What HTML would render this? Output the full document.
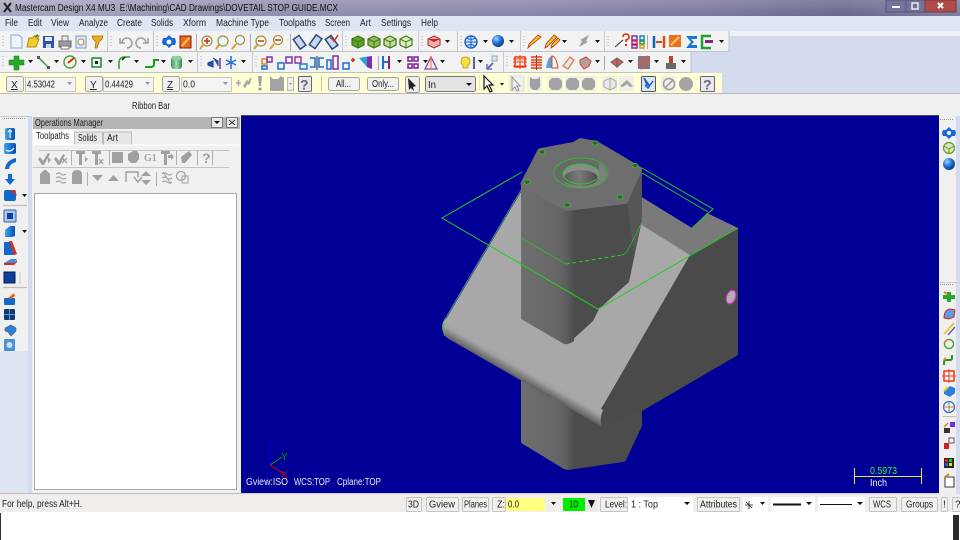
<!DOCTYPE html>
<html><head><meta charset="utf-8"><title>Mastercam</title>
<style>
html,body{margin:0;padding:0;background:#fff;overflow:hidden}
svg{display:block;position:absolute;left:0;top:0;filter:blur(.35px)}
text{font-family:"Liberation Sans",sans-serif;font-size:10px;fill:#222;white-space:pre}
.b{fill:#f1f1f1;stroke:#a5a5a5;stroke-width:1}
.dd{fill:#111}
.g{fill:#a0a0a0}
.gs{fill:none;stroke:#a0a0a0;stroke-width:1.6}
</style></head><body>
<svg width="960" height="540" viewBox="0 0 960 540" xmlns="http://www.w3.org/2000/svg">
<defs>
<linearGradient id="tb" x1="0" x2="1" y1="0" y2="0"><stop offset="0" stop-color="#a8a6bf"/><stop offset=".3" stop-color="#8f8cad"/><stop offset=".55" stop-color="#8783a8"/><stop offset=".75" stop-color="#78759c"/><stop offset=".88" stop-color="#67668c"/><stop offset="1" stop-color="#7f7da0"/></linearGradient>
<linearGradient id="tb2" x1="0" x2="0" y1="0" y2="1"><stop offset="0" stop-color="#fff" stop-opacity=".18"/><stop offset="1" stop-color="#fff" stop-opacity="0"/></linearGradient>
<linearGradient id="fil" gradientUnits="userSpaceOnUse" x1="520" y1="365" x2="512" y2="379"><stop offset="0" stop-color="#a8a8a8"/><stop offset=".2" stop-color="#a4a4a4"/><stop offset="1" stop-color="#484848"/></linearGradient>
<linearGradient id="pl" gradientUnits="userSpaceOnUse" x1="521" x2="575" y1="0" y2="0"><stop offset="0" stop-color="#6e6e6e"/><stop offset=".7" stop-color="#666"/><stop offset=".85" stop-color="#5c5c5c"/><stop offset="1" stop-color="#4c4c4c"/></linearGradient>
<linearGradient id="hol" x1="0" x2="1" y1="0" y2="0"><stop offset="0" stop-color="#5c5c5c"/><stop offset=".45" stop-color="#7a7a7a"/><stop offset="1" stop-color="#4a4a4a"/></linearGradient>
<linearGradient id="bs" x1="0" x2="1" y1="0" y2="0"><stop offset="0" stop-color="#3aa5f0"/><stop offset="1" stop-color="#0a4fb0"/></linearGradient>
<radialGradient id="sph" cx=".35" cy=".3" r=".8"><stop offset="0" stop-color="#9fd0ff"/><stop offset=".5" stop-color="#1c6fd0"/><stop offset="1" stop-color="#0a2f80"/></radialGradient>
<linearGradient id="cy" x1="0" x2="1" y1="0" y2="0"><stop offset="0" stop-color="#2f9a55"/><stop offset=".5" stop-color="#a8d8b0"/><stop offset="1" stop-color="#2b8a4a"/></linearGradient>
</defs>

<!-- Title bar -->
<rect width="960" height="16" fill="url(#tb)"/><rect width="960" height="16" fill="url(#tb2)"/>
<path d="M4 3l7 9M11 3l-7 9" stroke="#222" stroke-width="2"/>
<text x="15" y="11" textLength="323" lengthAdjust="spacingAndGlyphs" style="fill:#111">Mastercam Design X4 MU3  E:\Machining\CAD Drawings\DOVETAIL STOP GUIDE.MCX</text>
<rect x="886" y="0" width="20" height="12" fill="#75739a" stroke="#55547a"/>
<rect x="906" y="0" width="19" height="12" fill="#75739a" stroke="#55547a"/>
<rect x="925" y="0" width="31" height="12" fill="#b24a45" stroke="#6d3a50"/>
<rect x="892" y="6" width="8" height="2" fill="#fff"/>
<rect x="912" y="3" width="6" height="6" fill="none" stroke="#fff" stroke-width="1.3"/>
<path d="M938 3l5 5M943 3l-5 5" stroke="#fff" stroke-width="2"/>

<!-- Menu bar -->
<rect y="16" width="960" height="15" fill="#dfe5f3"/>
<g>
<text x="5" y="26" textLength="13" lengthAdjust="spacingAndGlyphs">File</text><text x="28" y="26" textLength="14" lengthAdjust="spacingAndGlyphs">Edit</text><text x="51" y="26" textLength="18" lengthAdjust="spacingAndGlyphs">View</text><text x="79" y="26" textLength="29" lengthAdjust="spacingAndGlyphs">Analyze</text><text x="117" y="26" textLength="25" lengthAdjust="spacingAndGlyphs">Create</text><text x="151" y="26" textLength="22" lengthAdjust="spacingAndGlyphs">Solids</text><text x="183" y="26" textLength="23" lengthAdjust="spacingAndGlyphs">Xform</text><text x="216" y="26" textLength="53" lengthAdjust="spacingAndGlyphs">Machine Type</text><text x="279" y="26" textLength="37" lengthAdjust="spacingAndGlyphs">Toolpaths</text><text x="325" y="26" textLength="25" lengthAdjust="spacingAndGlyphs">Screen</text><text x="360" y="26" textLength="11" lengthAdjust="spacingAndGlyphs">Art</text><text x="381" y="26" textLength="30" lengthAdjust="spacingAndGlyphs">Settings</text><text x="421" y="26" textLength="17" lengthAdjust="spacingAndGlyphs">Help</text>
</g>

<!-- Toolbar background -->
<rect y="31" width="960" height="63" fill="#d5dbee"/>
<rect y="31" width="960" height="5" fill="#eef1f8"/>
<rect x="0" y="31" width="729" height="20" fill="#f2f2f2"/>
<rect x="0" y="52" width="691" height="20" fill="#f2f2f2"/>
<path d="M0 51.500H729V31M0 72.500H691V52" fill="none" stroke="#bfc3cc"/>
<path d="M107.500 31v20M153.500 31v20M342.500 31v20M418.500 31v20M457.500 31v20M520.500 31v20M604.500 31v20M197.500 52v20M252.500 52v20M503.500 52v20" stroke="#c4c8d0"/>
<rect x="0" y="73" width="722" height="20" fill="#ffffd4"/>
<rect y="93" width="960" height="1" fill="#b8b8b8"/>
<rect y="94" width="960" height="22" fill="#f0f0f0"/>
<text x="132" y="109" textLength="38" lengthAdjust="spacingAndGlyphs">Ribbon Bar</text>

<!-- Row 1 icons -->
<path d="M11 35h8l3 3v10H11z" fill="#eef4ff" stroke="#8aa8d0"/>
<path d="M27 47l2-9h4l1-2h5l-2 3h2l-3 8z" fill="#f2cc30" stroke="#b58a10"/><path d="M35 37l3-2" stroke="#2a9a30" stroke-width="2"/>
<path d="M43 36h11v12H43z" fill="#3050b0"/><rect x="45" y="37" width="7" height="4" fill="#dfe8ff"/><rect x="46" y="44" width="5" height="4" fill="#cdd"/>
<rect x="59" y="41" width="12" height="6" fill="#9a9aa4" stroke="#666"/><rect x="62" y="36" width="6" height="5" fill="#e8e8ee" stroke="#777"/><rect x="61" y="46" width="8" height="3" fill="#fff" stroke="#777"/>
<rect x="76" y="36" width="10" height="12" fill="#d8e6fa" stroke="#7d9cc4"/><circle cx="81" cy="42" r="3" fill="#fff" stroke="#c88030"/>
<path d="M92 36h11l-1 3-3 3-2 6h-2l1-6-3-3z" fill="#e8b020" stroke="#a07010" stroke-width=".7"/>
<path d="M122 43a5 5 0 1 1 5 5M120 38v5h5" class="gs" fill="none"/><path d="M146 43a5 5 0 1 0-5 5M148 38v5h-5" class="gs" fill="none"/>
<path d="M169 35l3 3h3l1 4-1 3h-3l-3 3-3-3h-3l-1-3 1-4h3z" fill="#1768d8"/><circle cx="169" cy="42" r="2.400" fill="#fff"/>
<rect x="180" y="36" width="11" height="12" fill="#e86820" stroke="#802010"/><path d="M182 46l7-8" stroke="#f6d040" stroke-width="2"/>
<path d="M196.500 34v17" stroke="#aaa"/>
<g fill="#dff" stroke="#c08a30" stroke-width="1.300">
<circle cx="207" cy="41" r="5"/><circle cx="223" cy="41" r="5"/><circle cx="240" cy="40" r="4.500"/><circle cx="261" cy="41" r="5"/><circle cx="278" cy="40" r="4.500"/></g>
<path d="M204 41h6M207 38v6" stroke="#e02020" stroke-width="1.500"/><path d="M258 41h6M275 40h6" stroke="#e03020" stroke-width="1.500"/>
<path d="M203 45l-3 4M219 45l-3 4M236 44l-4 5M257 45l-3 4M274 44l-4 5" stroke="#d8a030" stroke-width="2"/>
<path d="M250.500 34v17M290.500 34v17" stroke="#aaa"/>
<g stroke="#2a4a80" stroke-width="1.500" fill="#c8d8ee"><rect x="296" y="36" width="7" height="12" transform="rotate(-35 300 42)"/><rect x="312" y="36" width="7" height="12" transform="rotate(35 316 42)"/><rect x="328" y="36" width="7" height="12" transform="rotate(-35 332 42)"/></g>
<path d="M330 37l4 4 4-6" fill="none" stroke="#d03030" stroke-width="1.500"/>
<g stroke="#3f7a10" stroke-width="1.200"><path d="M358 36l6 3v6l-6 3-6-3v-6z" fill="#5fa030"/><path d="M374 36l6 3v6l-6 3-6-3v-6z" fill="#8fb858"/><path d="M390 36l6 3v6l-6 3-6-3v-6z" fill="#c8d8a0"/><path d="M406 36l6 3v6l-6 3-6-3v-6z" fill="#e4eac8"/></g>
<path d="M352 39l6 3 6-3M358 42v6M368 39l6 3 6-3M374 42v6M384 39l6 3 6-3M390 42v6M400 39l6 3 6-3M406 42v6" stroke="#3f7a10" fill="none"/>
<path d="M434 36l6 3v6l-6 3-6-3v-6z" fill="#f0b0b0" stroke="#b02020"/><path d="M428 39l6 3 6-3z" fill="#c02020"/>
<circle cx="471" cy="42" r="6" fill="#cfe4ff" stroke="#1a60c0" stroke-width="1.400"/><path d="M465 42h12M471 36v12M467 38q4 3 8 0M467 46q4-3 8 0" stroke="#1a60c0" fill="none"/>
<circle cx="498" cy="41" r="6" fill="url(#sph)"/>
<path d="M530 46l-2 2 1-4 9-9 3 2z" fill="#f2c020" stroke="#c03020" stroke-width=".8"/>
<path d="M548 46l-3 2 1-4 8-9 3 2zM554 46l-3 2 1-4 6-6 2 2z" fill="#e8c820" stroke="#c03020" stroke-width=".8"/>
<path d="M579 47l3-6-2-1 9-5-3 6 2 1z" class="g"/>
<path d="M615 47l8-7" stroke="#333"/><path d="M623 37q0-3 3-3t3 3q0 2-3 3v2" fill="none" stroke="#e03010" stroke-width="1.600"/><rect x="625" y="44" width="2" height="2" fill="#e03010"/>
<g fill="none" stroke-width="1.500"><rect x="632" y="36" width="5" height="4" stroke="#8030a0"/><rect x="632" y="41" width="5" height="3" stroke="#e02060"/><rect x="632" y="45" width="5" height="3" stroke="#8030a0"/><rect x="640" y="36" width="4" height="4" stroke="#2080d0"/><rect x="640" y="41" width="4" height="3" stroke="#20a040"/><rect x="640" y="45" width="4" height="3" stroke="#d0a020"/></g>
<path d="M647.500 35v14" stroke="#aaa"/>
<path d="M654 36v12" stroke="#1060c0" stroke-width="2.500"/><path d="M664 36v12" stroke="#e04810" stroke-width="2.500"/><path d="M656 42h6" stroke="#e04810" stroke-width="2"/>
<rect x="669" y="35" width="12" height="12" fill="#f07020"/><path d="M671 45l8-8" stroke="#ffd060" stroke-width="2"/>
<path d="M686 36h11v3h-6l3 3-3 3h6v3h-11l5-6z" fill="#1878d8"/>
<path d="M711 36h-9v12h9" stroke="#20a030" stroke-width="2.500" fill="none"/><rect x="705" y="40" width="8" height="3" fill="#901890"/>
<!-- dropdown arrows row 1 -->
<path d="M445 40h5l-2.500 3zM483 40h5l-2.500 3zM509 40h5l-2.500 3zM562 40h5l-2.500 3zM595 40h5l-2.500 3zM719 40h5l-2.500 3z" class="dd"/>

<!-- Row 2 icons -->
<path d="M14 56h5v4h5v5h-5v5h-5v-5h-5v-5h5z" fill="#28a828" stroke="#1c7a1c" stroke-width=".5"/>
<path d="M38 57l11 11" stroke="#3a9a3a" stroke-width="1.500"/><rect x="37" y="56" width="3" height="3" fill="#555"/><rect x="47" y="66" width="3" height="3" fill="#555"/>
<circle cx="70" cy="62" r="6" fill="#fff4e8" stroke="#48a048" stroke-width="1.400"/><path d="M68 63l6-5" stroke="#e03010" stroke-width="2"/>
<rect x="92" y="58" width="9" height="9" fill="none" stroke="#1a8a30" stroke-width="1.500"/><rect x="95" y="61" width="3" height="3" fill="#222"/>
<path d="M119 69v-6q0-6 6-6h5" fill="none" stroke="#28a028" stroke-width="1.500"/><path d="M122 60l3-3" stroke="#222" stroke-width="1.500"/>
<path d="M145 67h6q3 0 3-3v-4h5" fill="none" stroke="#18a018" stroke-width="2"/>
<rect x="171" y="56" width="11" height="13" rx="3" fill="url(#cy)"/><ellipse cx="176.500" cy="58" rx="5.500" ry="2.200" fill="#8fcf9f"/>
<path d="M208 63l5-2v6l-5-2zM213 58l5 3v5" fill="#1a5fc0" stroke="#203090"/><path d="M220 58v11" stroke="#8030a0" stroke-width="1.500"/>
<path d="M231 56v13M226 60l10 5M236 60l-10 5" stroke="#2070d8" stroke-width="1.500"/>
<g fill="none" stroke-width="1.500">
<rect x="262" y="59" width="5" height="5" stroke="#f08020"/><rect x="267" y="57" width="5" height="5" stroke="#8030a0"/><rect x="262" y="66" width="5" height="3" stroke="#1a70d0"/>
<rect x="278" y="63" width="6" height="6" stroke="#1a70d0"/><rect x="286" y="57" width="6" height="6" stroke="#8030a0"/>
<rect x="295" y="57" width="6" height="6" stroke="#a030a0"/><rect x="300" y="64" width="7" height="5" stroke="#1a80d0"/>
<path d="M310 58h5v9h-5M324 58h-5v9h5" stroke="#1a70d0"/><path d="M317 56v14" stroke="#666"/>
<rect x="327" y="60" width="4" height="9" stroke="#1a70d0"/><rect x="333" y="56" width="5" height="13" stroke="#8030a0"/>
<rect x="343" y="63" width="6" height="6" stroke="#1a70d0"/></g>
<path d="M351 60h4M353 58v4" stroke="#e02010" stroke-width="1.600"/>
<path d="M359 58l12-2v13l-4-2z" fill="#28a0d8"/><path d="M367 57l5-1v13l-5-2z" fill="#8030a0"/>
<path d="M378.500 56v14" stroke="#aaa"/>
<path d="M383 56v13" stroke="#1a70d0" stroke-width="2"/><path d="M389 56v13" stroke="#8a2080" stroke-width="2"/><path d="M383 62h5" stroke="#1a70d0" stroke-width="2"/>
<g fill="none" stroke="#7a2090" stroke-width="1.500"><rect x="408" y="57" width="4" height="4"/><rect x="414" y="57" width="4" height="4"/><rect x="408" y="64" width="4" height="4"/><rect x="414" y="64" width="4" height="4"/></g>
<path d="M425 69l6-12 6 12z" fill="#f0e8f4" stroke="#8a4a9a" stroke-width="1.300"/><path d="M431 57v12" stroke="#e08020"/>
<!-- remaining row 2 -->
<path d="M465 57q5 0 5 5 0 2-2 3v3h-5v-3q-2-1-2-3 0-5 4-5z" fill="#f6e040" stroke="#c8a820"/><path d="M474 57v12" stroke="#5060b0" stroke-width="2"/>
<rect x="492" y="56" width="5" height="5" fill="#dfe4ee" stroke="#9aa4c0"/><path d="M487 69l6-6" stroke="#6a70c0" stroke-width="2"/><path d="M487 64v5h5" fill="none" stroke="#6a70c0" stroke-width="1.500"/>
<rect x="515" y="57" width="10" height="10" fill="none" stroke="#ee3a10" stroke-width="1.500"/><path d="M520 55v14M513 62h14M513 59h14M513 66h14" stroke="#ee3a10"/>
<path d="M531 57h11M531 60h11M531 62.500h11M531 65h11M531 68h11" stroke="#ee3a10" stroke-width="1.500"/><path d="M536.500 55v15" stroke="#a04020"/>
<path d="M546 68q2-12 6-12v12z" fill="#5aa0d8"/><path d="M552 56q4 0 6 12h-6z" fill="#fff" stroke="#e04010"/>
<path d="M563 66l7-9 4 3-6 9z" fill="#d8e8f8" stroke="#e88030" stroke-width="1.300"/>
<path d="M580 60l6-3 5 4-2 5-5 3-4-5z" fill="#b0a0a0" stroke="#e04030"/>
<path d="M604.500 56v14" stroke="#aaa"/>
<path d="M611 62l6-4 6 4-6 5z" fill="#d06050" stroke="#666"/><path d="M617 58v10" stroke="#666"/>
<rect x="638" y="56" width="12" height="13" fill="#7a7a7a"/><path d="M638 65l10-9M641 69l9-9" stroke="#e05060" stroke-width="1.800"/>
<rect x="669" y="56" width="4" height="7" fill="#c04030"/><rect x="666" y="63" width="10" height="6" fill="#6a6a6a"/>
<!-- dropdown arrows row 2 -->
<path d="M28 60h5l-2.500 3zM54 60h5l-2.500 3zM81 60h5l-2.500 3zM108 60h5l-2.500 3zM134 60h5l-2.500 3zM161 60h5l-2.500 3zM188 60h5l-2.500 3zM241 60h5l-2.500 3zM397 60h5l-2.500 3zM423 60h5l-2.500 3zM440 60h5l-2.500 3zM478 60h5l-2.500 3zM595 60h5l-2.500 3zM628 60h5l-2.500 3zM654 60h5l-2.500 3zM681 60h5l-2.500 3z" class="dd"/>
<!-- grips -->
<path d="M3 36v12M3 56v12M111 36v12M157 36v12M346 36v12M422 36v12M461 36v12M524 36v12M608 36v12M201 56v12M256 56v12M507 56v12" stroke="#aab0c0" stroke-dasharray="1 2"/>

<!-- Row 3 -->
<rect x="6.500" y="76.500" width="17" height="15" rx="2" class="b"/><text x="11" y="88" text-decoration="underline">X</text>
<rect x="85.500" y="76.500" width="17" height="15" rx="2" class="b"/><text x="90" y="88" text-decoration="underline">Y</text>
<rect x="162.500" y="76.500" width="17" height="15" rx="2" class="b"/><text x="167" y="88" text-decoration="underline">Z</text>
<g fill="#f4f4f4" stroke="#c8c8c0"><rect x="25.500" y="77.500" width="50" height="14"/><rect x="103.500" y="77.500" width="50" height="14"/><rect x="181.500" y="77.500" width="50" height="14"/></g>
<text x="27" y="87.500" textLength="28" lengthAdjust="spacingAndGlyphs">4.53042</text><text x="105" y="87.500" textLength="28" lengthAdjust="spacingAndGlyphs">0.44429</text><text x="183" y="87.500" textLength="12" lengthAdjust="spacingAndGlyphs">0.0</text>
<path d="M67 82h5l-2.500 3zM145 82h5l-2.500 3zM223 82h5l-2.500 3z" fill="#999"/>
<path d="M236 83h5M238.500 80v6M244 86l3-5 2 1 2-4-2 6-2-1-2 4z" stroke="#a8a8a8" stroke-width="1.500" fill="#a8a8a8"/>
<path d="M258 76h4l-1 10h-2z" class="g"/><circle cx="260" cy="89" r="1.600" class="g"/>
<path d="M270 76l3 3h5l3-3 3 2v13h-14z" fill="#a4a4a4"/>
<rect x="287.500" y="77.500" width="6" height="13" fill="#eee" stroke="#bbb"/><path d="M289 83h3l-1.500 2z" fill="#999"/>
<rect x="298.500" y="76.500" width="13" height="15" rx="1" fill="#e8e8ee" stroke="#667"/><text x="300" y="89.500" style="font-size:14px;font-weight:bold;fill:#667">?</text>
<rect x="328.500" y="77.500" width="31" height="13" rx="2" class="b" stroke="#888"/><text x="336" y="87" textLength="15" lengthAdjust="spacingAndGlyphs">All...</text>
<rect x="367.500" y="77.500" width="31" height="13" rx="2" class="b" stroke="#888"/><text x="372" y="87" textLength="22" lengthAdjust="spacingAndGlyphs">Only...</text>
<rect x="405.500" y="76.500" width="14" height="16" rx="2" fill="#eee" stroke="#999"/><path d="M408 78l8 8-3 1 1 4-3-3-2 2z" fill="#222"/>
<path d="M321.500 76v15" stroke="#c8c8a0"/><path d="M479.500 75v16" stroke="#e8e8c8"/>
<rect x="425.500" y="76.500" width="50" height="15" rx="2" fill="#e4e4e4" stroke="#777"/><text x="428" y="88" textLength="8" lengthAdjust="spacingAndGlyphs">In</text><path d="M466 83h6l-3 3z" class="dd"/>
<path d="M484 76l9 9-4 0 3 6-2 1-3-6-3 3z" fill="#fff" stroke="#111" stroke-width="1.200"/><path d="M500 83h4l-2 2.500z" class="dd"/>
<rect x="510" y="76" width="14" height="15" fill="#f0f0ec" stroke="#ddd"/><path d="M512 77l8 9-3 0 2 4-2 1-2-4-3 3z" fill="#eee" stroke="#999"/>
<rect x="527" y="76" width="15" height="15" fill="#efefe8"/><path d="M530 77l3 2h4l3-2v10l-3 3h-4l-3-3z" class="g"/>
<g fill="#efefe8"><rect x="548" y="76" width="15" height="15"/><rect x="565" y="76" width="15" height="15"/><rect x="581" y="76" width="15" height="15"/><rect x="602" y="76" width="15" height="15"/><rect x="619" y="76" width="15" height="15"/><rect x="661" y="76" width="15" height="15"/></g>
<path d="M552 78h7l3 3v6l-3 3h-7l-3-3v-6zM569 78h7l3 3v6l-3 3h-7l-3-3v-6zM585 78h7l3 3v6l-3 3h-7l-3-3v-6z" fill="#a4a4a4"/>
<path d="M610 78l6 3v6l-6 3-6-3v-6z" fill="#e8e8e8" stroke="#aaa"/><path d="M610 78v12" stroke="#aaa"/>
<path d="M620 86l7-6 6 6-3 1-3-3-4 3z" fill="#a4a4a4"/>
<rect x="641.500" y="76.500" width="14" height="15" rx="1" fill="#dde4f0" stroke="#556"/><path d="M644 78l5 7-2 0zM645 85l3 3 5-7" fill="none" stroke="#1a60c8" stroke-width="1.500"/>
<circle cx="669" cy="84" r="5.500" fill="none" stroke="#a0a0a0" stroke-width="1.600"/><path d="M665.500 87.500l7-7" stroke="#a0a0a0" stroke-width="1.600"/>
<circle cx="686" cy="84" r="7" fill="#a4a4a4"/>
<rect x="700.500" y="76.500" width="14" height="15" rx="1" fill="#e8e8ee" stroke="#667"/><text x="703" y="89.500" style="font-size:14px;font-weight:bold;fill:#667">?</text>

<!-- Left area -->
<rect x="0" y="116" width="241" height="378" fill="#dfe4f2"/>
<rect x="0" y="116" width="28" height="235" fill="#f0f0f0"/>
<rect x="28" y="116" width="4" height="378" fill="#d5dbee"/>
<rect x="0" y="116" width="241" height="1" fill="#ccc"/>
<path d="M4 118.500h22" stroke="#999" stroke-dasharray="1 1"/>
<path d="M3 205.500h24M3 287.500h24" stroke="#c0c0c0" stroke-width="1.200"/>
<path d="M20 272v12" stroke="#ccc"/>
<!-- Left toolbar icons -->
<rect x="5" y="128" width="10" height="12" rx="2" fill="url(#bs)"/><path d="M10 130v8M8 132l2-2 2 2" stroke="#fff" stroke-width="1.200" fill="none"/>
<rect x="4" y="143" width="12" height="11" rx="2" fill="url(#bs)"/><path d="M6 150q4 3 8-2" stroke="#fff" stroke-width="1.200" fill="none"/>
<path d="M5 169q1-9 11-11v4q-6 1-7 7z" fill="#1468c8"/>
<path d="M8 174h4v5h3l-5 6-5-6h3z" fill="#1468d8"/>
<rect x="4" y="190" width="12" height="11" rx="2" fill="#1468c8"/><path d="M10 190l5 0 2 6z" fill="#e02a20"/><path d="M22 194h5l-2.500 3z" class="dd"/>
<rect x="4" y="210" width="12" height="12" rx="1" fill="#a8c8f0" stroke="#3060a0"/><rect x="7" y="213" width="6" height="6" fill="#1040a0"/>
<path d="M5 230l5-4h5v10l-3 1H5z" fill="url(#bs)"/><path d="M22 230h5l-2.500 3z" class="dd"/>
<path d="M4 242h6l5 13H4z" fill="#1468c8"/><path d="M9 241l3 0 5 13-3 1z" fill="#e02a20"/>
<path d="M4 263l7-4h6l-3 4z" fill="#3a90e0"/><path d="M4 263h10l3-3v2l-3 3H4z" fill="#e02a20"/>
<rect x="4" y="272" width="11" height="11" fill="#0a3fa0" stroke="#101a50"/>
<rect x="4" y="298" width="11" height="7" rx="1" fill="#1468c8"/><path d="M8 298l6-5 1 3-4 3z" fill="#ee6020"/>
<rect x="4" y="309" width="11" height="11" rx="1" fill="#123a70"/><path d="M4 314.500h11M9.500 309v11" stroke="#4aa0e0"/>
<path d="M5 328l6-3 5 3v3l-5 5-3-4-3-1z" fill="#2a80e0" stroke="#555" stroke-width=".6"/>
<rect x="4" y="339" width="11" height="12" rx="1" fill="#4890d8"/><circle cx="9.500" cy="345" r="3" fill="#cfe0f4"/>

<!-- Ops manager -->
<rect x="32" y="116" width="209" height="378" fill="#f0f0f0"/>
<rect x="33" y="117" width="207" height="12" fill="#b5b5b5"/>
<text x="35" y="126" textLength="68" lengthAdjust="spacingAndGlyphs" style="fill:#222">Operations Manager</text>
<rect x="211.500" y="117.500" width="11" height="10" fill="#e8e8e8" stroke="#777"/><path d="M214 121h6l-3 3z" class="dd"/>
<rect x="226.500" y="117.500" width="11" height="10" fill="#e8e8e8" stroke="#777"/><path d="M229 120l6 5M235 120l-6 5" stroke="#333"/>
<rect x="33" y="130" width="41" height="15" fill="#fff"/>
<path d="M74.500 145v-13h28v13M103.500 145v-13h28v13" fill="#e6e6e6" stroke="#bbb"/>
<text x="36" y="139" textLength="33" lengthAdjust="spacingAndGlyphs">Toolpaths</text><text x="78" y="141" textLength="19" lengthAdjust="spacingAndGlyphs">Solids</text><text x="107" y="141" textLength="11" lengthAdjust="spacingAndGlyphs">Art</text>
<path d="M74 145h166" stroke="#fff"/>
<path d="M39 150.500h190M33 167.500h196" stroke="#c4c4c4"/>
<!-- ops icons -->
<path d="M40 157l3 4 5-8 2 1-6 11h-2l-4-6zM48 157l3 3-3 3z" class="g"/>
<path d="M56 157l3 4 4-7 2 1-5 10h-2l-4-6z" class="g"/><path d="M62 158l5 5M67 158l-5 5" stroke="#a0a0a0" stroke-width="1.300"/>
<path d="M76 151h9v3h-3v11h-3v-11h-3zM85 157l3 2-3 3z" class="g"/>
<path d="M92 151h9v3h-3v11h-3v-11h-3z" class="g"/><path d="M99 159l4 5M103 159l-4 5" stroke="#a0a0a0" stroke-width="1.300"/>
<path d="M71.500 151v14M109.500 151v14M176.500 151v14M197.500 151v14M212.500 151v14M87.500 172v14M156.500 172v14" stroke="#b0b0b0"/>
<rect x="112" y="152" width="11" height="11" class="g"/>
<path d="M128 154l5-3h4l2 3v5l-3 4h-5l-3-3z" class="g"/>
<text x="144" y="161" style="font-size:10px;font-weight:bold;fill:#a0a0a0;font-family:'Liberation Serif',serif">G1</text>
<path d="M161 151h9v3h-3v11h-3v-11h-3zM168 155h3v-2l3 4-3 3v-2h-3z" class="g"/>
<path d="M182 163l-1-6 8-6 3 4-7 8z" class="g"/>
<text x="202" y="163" style="font-size:14px;font-weight:bold;fill:#a0a0a0">?</text>
<path d="M40 174l4-4h2l4 4v10h-10z" class="g"/>
<path d="M56 174q3-2 5 0t5 0M56 178q3-2 5 0t5 0M56 182q3-2 5 0t5 0" fill="none" stroke="#a4a4a4" stroke-width="1.200"/>
<path d="M72 175q0-5 5-5t5 5v9H72z" class="g"/>
<path d="M92 175h11l-5.500 6zM108 181h11l-5.500-6z" class="g"/>
<path d="M126 182v-10h12v5M134 177l4 5 4-5" fill="none" stroke="#a0a0a0" stroke-width="1.500"/>
<path d="M141 176l5-5 5 5zM141 180l5 5 5-5z" class="g"/>
<path d="M162 174q3-2 5 0t5 0M162 178q3-2 5 0t5 0M162 182q3-2 5 0t5 0M163 172l8 12" fill="none" stroke="#a4a4a4" stroke-width="1.100"/>
<circle cx="181" cy="176" r="4.500" fill="none" stroke="#a0a0a0" stroke-width="1.200"/><rect x="182" y="176" width="6" height="7" fill="none" stroke="#a0a0a0"/>
<rect x="34.500" y="193.500" width="202" height="296" fill="#fff" stroke="#a8a8a8"/>

<!-- Viewport -->
<rect x="241" y="115" width="698" height="379" fill="#000096"/>
<path d="M241 115.500h698" stroke="#4a4a4a"/>
<path d="M241 493.500h698" stroke="#d0d0d0"/>

<!-- lower post -->
<path d="M521 375V441q0 2 2 3l41 25q2 1 4 1l55-8q2 0 3-2l16-34V405H610z" fill="#4c4c4c"/>
<path d="M521 375V441q0 2 2 3l41 25q4 1 10 0V400z" fill="url(#pl)"/>
<!-- body right side (overlaps under the top surface so no blue seam shows) -->
<path d="M680 255L690 250L738 228V355L642 411L602 427L590 413z" fill="#4a4a4a"/>
<!-- back wall -->
<path d="M640 196L692 228L707 213L738 228L690 255L640 225z" fill="#7a7a7a"/>
<!-- top surface -->
<path d="M446 319L522 190L640 224L690 255L604 404Q600 409 600 413L447 322z" fill="#a8a8a8"/>
<!-- fillet -->
<path d="M445 318L603 410Q599 420 602 427L447 338Q440 331 443 322Q444 320 446 319z" fill="url(#fil)"/>
<path d="M445 319Q441 326 445 336" fill="none" stroke="#3cc83c" stroke-width=".8"/>
<path d="M445 319L521 190" stroke="#5ad05a" stroke-width=".7"/>
<!-- post -->
<path d="M521 183V317q0 2 2 3l41 23q2 1 4 0l2-1 L593 321L599 309L629 282L642 220V167L627 198L567 209z" fill="#4c4c4c"/>
<path d="M521 183V317q0 2 2 3l41 24q4 1 10-3V209z" fill="url(#pl)"/>
<path d="M627 200L642 167V220L634 255z" fill="#565656"/>
<path d="M521 186q-1-3 0-4l17-33q1-1 3-1l32-6 7-4 17 3 44 26q1 1 1 3l-14 32q-1 2-3 2l-58 7q-2 0-3-1z" fill="#6e6e6e"/>
<!-- hole -->
<ellipse cx="581" cy="173" rx="27" ry="15" fill="#6a6a6a" stroke="#22cc22" stroke-width=".8"/>
<path d="M599 163a27 15 0 0 1 8 10 27 15 0 0 1-26 15 27 15 0 0 1-18-6 26 12 0 0 0 36-12z" fill="#808080"/>
<ellipse cx="581" cy="174" rx="18" ry="10" fill="#8c8c8c" stroke="#22cc22" stroke-width=".9"/>
<ellipse cx="581" cy="178" rx="17" ry="8" fill="url(#hol)"/>
<path d="M563 174a18 10 0 0 0 36 0" fill="none" stroke="#22cc22" stroke-width=".9"/>
<!-- screw holes -->
<g fill="#4e4e4e" stroke="#22cc22" stroke-width=".9">
<ellipse cx="542" cy="152" rx="3" ry="2.200"/><ellipse cx="595" cy="143" rx="3" ry="2.200"/><ellipse cx="635" cy="165.500" rx="3" ry="2.200"/><ellipse cx="620" cy="197" rx="3" ry="2.200"/><ellipse cx="567" cy="205" rx="3" ry="2.200"/><ellipse cx="527" cy="182" rx="3" ry="2.200"/>
</g>
<!-- green wireframe -->
<g fill="none" stroke="#1fd01f" stroke-width="1">
<path d="M522 172L442 218L598 309L738 228"/>
<path d="M642 168L713 209L692 228M642 173L708 212"/>
<path d="M521 238L566 264" stroke-width=".7"/>
<path d="M566 264L622 255" stroke-dasharray="4 2.500"/>
<path d="M622 255Q626 254 628 250L642 222" stroke-width=".7"/>
</g>
<!-- magenta -->
<ellipse cx="731" cy="297" rx="4.500" ry="7" transform="rotate(20 731 297)" fill="#b0b0b0" stroke="#d830c8" stroke-width="1.200"/>

<!-- axes -->
<path d="M270 465V452" stroke="#0000ff"/><path d="M270 465L282 457" stroke="#00a000"/><path d="M270 465L283 473" stroke="#e00000"/>
<text x="267" y="451" style="fill:#0000e0">Z</text>
<text x="281" y="460" style="fill:#00a000">Y</text>
<text x="281" y="478" style="fill:#e00000">X</text>
<text x="246" y="485" textLength="42" lengthAdjust="spacingAndGlyphs" style="fill:#e8eef8">Gview:ISO</text><text x="294" y="485" textLength="36" lengthAdjust="spacingAndGlyphs" style="fill:#e8eef8">WCS:TOP</text><text x="337" y="485" textLength="44" lengthAdjust="spacingAndGlyphs" style="fill:#e8eef8">Cplane:TOP</text>
<!-- scale -->
<path d="M854.500 468v16M921.500 468v16M854 476.500h68" stroke="#e8e850"/>
<text x="870" y="474" textLength="27" lengthAdjust="spacingAndGlyphs" style="fill:#20ff40">0.5973</text>
<text x="870" y="486" textLength="17" lengthAdjust="spacingAndGlyphs" style="fill:#e8eef8">Inch</text>

<!-- Right toolbar -->
<rect x="939" y="116" width="21" height="378" fill="#f0f0f0"/>
<rect x="956" y="116" width="4" height="378" fill="#d5dbee"/>
<path d="M940 119.500h14M940 284.500h14" stroke="#999" stroke-dasharray="1 1"/>
<path d="M939 282.500h21" stroke="#ccc"/>
<path d="M949 127l3 3h3l1 3-1 3h-3l-3 3-3-3h-3l-1-3 1-3h3z" fill="#1768d8"/><circle cx="949" cy="133" r="2" fill="#fff"/>
<circle cx="949" cy="148" r="5.500" fill="#d8e4b8" stroke="#6a9a30" stroke-width="1.200"/><path d="M944 146l5 3 5-3M949 149v5" stroke="#6a9a30" fill="none"/>
<circle cx="949" cy="164" r="6" fill="url(#sph)"/>
<path d="M947 292h4v3h4v4h-4v3h-4v-3h-4v-4h4z" fill="#28a828"/><path d="M944 292l3 2" stroke="#f08020" stroke-width="2"/>
<path d="M944 318q0-8 6-9l5 1-1 7-5 2z" fill="#5aa0e0" stroke="#e02020"/>
<path d="M944 334l10-11" stroke="#e8c820" stroke-width="2"/><path d="M948 335l7-8" stroke="#7060c0" stroke-width="1.500"/>
<circle cx="949" cy="344" r="4.500" fill="none" stroke="#50a040" stroke-width="1.500"/><path d="M944 343l3-3" stroke="#e08020" stroke-width="1.500"/>
<path d="M944 365v-3q0-2 3-2h3q2 0 2-2v-3" fill="none" stroke="#18a018" stroke-width="2"/><path d="M944 360l2-2" stroke="#f08020" stroke-width="2"/>
<rect x="944" y="371" width="10" height="10" fill="none" stroke="#ee3a10" stroke-width="1.500"/><path d="M949 369v14M942 376h14" stroke="#ee3a10"/>
<path d="M944 391l6-5 5 2v5l-5 4-6-3z" fill="#2a80e0"/><path d="M944 391l4-4" stroke="#e8c820" stroke-width="2"/>
<circle cx="949" cy="407" r="5.500" fill="#dff" stroke="#3a70c0" stroke-width="1.300"/><path d="M943 407h12M949 402v11" stroke="#d87030"/>
<path d="M943 416.500h13" stroke="#bbb"/>
<rect x="950" y="422" width="5" height="5" fill="#7030e0"/><rect x="944" y="428" width="6" height="5" fill="#333"/><path d="M944 427l4-4" stroke="#e08020" stroke-width="1.500"/>
<rect x="949" y="438" width="5" height="5" fill="#fff" stroke="#555"/><rect x="944" y="443" width="5" height="6" fill="#d02020"/>
<rect x="944" y="458" width="10" height="10" fill="#282828"/><rect x="945" y="459" width="3" height="3" fill="#e02020"/><rect x="949" y="459" width="3" height="3" fill="#20c020"/><rect x="945" y="463" width="3" height="3" fill="#2060e0"/><rect x="949" y="463" width="3" height="3" fill="#e0e020"/>
<rect x="945" y="477" width="9" height="10" fill="#fff" stroke="#333"/><path d="M945 477l4-3" stroke="#e08020" stroke-width="2"/>

<!-- Status bar -->
<rect y="494" width="960" height="18" fill="#f0edeb"/>
<rect x="0" y="493" width="241" height="1" fill="#bbb"/>
<text x="2" y="507" textLength="80" lengthAdjust="spacingAndGlyphs">For help, press Alt+H.</text>
<g fill="#f2f0ee" stroke="#c4c4c4">
<rect x="406.500" y="497.500" width="15" height="14" rx="1"/><rect x="426.500" y="497.500" width="32" height="14" rx="1"/><rect x="462.500" y="497.500" width="26" height="14" rx="1"/><rect x="492.500" y="497.500" width="13" height="14" rx="1"/><rect x="600.500" y="497.500" width="27" height="14" rx="1"/><rect x="697.500" y="497.500" width="42" height="14" rx="1"/><rect x="869.500" y="497.500" width="27" height="14" rx="1"/><rect x="901.500" y="497.500" width="36" height="14" rx="1"/><rect x="941.500" y="497.500" width="6" height="14" rx="1"/><rect x="952.500" y="497.500" width="8" height="14" rx="1"/>
</g>
<rect x="628" y="497" width="65" height="15" fill="#fff"/><rect x="743" y="497" width="25" height="15" fill="#fff"/><rect x="771" y="497" width="44" height="15" fill="#fff"/><rect x="818" y="497" width="47" height="15" fill="#fff"/>
<rect x="506" y="498" width="39" height="13" fill="#ffff80"/>
<rect x="563" y="498" width="22" height="13" fill="#00f000"/>
<rect x="586" y="498" width="11" height="13" fill="#e8e8e8"/>
<path d="M588 500h7l-3.500 8z" fill="#111"/>
<text x="408" y="507.500" textLength="11" lengthAdjust="spacingAndGlyphs">3D</text><text x="429" y="507.500" textLength="26" lengthAdjust="spacingAndGlyphs">Gview</text><text x="464" y="507.500" textLength="23" lengthAdjust="spacingAndGlyphs">Planes</text><text x="497" y="507.500" textLength="8" lengthAdjust="spacingAndGlyphs">Z:</text><text x="508" y="507.500" textLength="11" lengthAdjust="spacingAndGlyphs">0.0</text><text x="569" y="507.500" textLength="9" lengthAdjust="spacingAndGlyphs">10</text><text x="605" y="507.500" textLength="22" lengthAdjust="spacingAndGlyphs">Level:</text><text x="631" y="507.500" textLength="27" lengthAdjust="spacingAndGlyphs">1 : Top</text><text x="700" y="507.500" textLength="37" lengthAdjust="spacingAndGlyphs">Attributes</text><text x="873" y="507.500" textLength="18" lengthAdjust="spacingAndGlyphs">WCS</text><text x="906" y="507.500" textLength="27" lengthAdjust="spacingAndGlyphs">Groups</text><text x="943" y="507.500">!</text><text x="955" y="507.500">?</text>
<path d="M551 502h5l-2.500 3zM684 502h6l-3 3zM760 502h5l-2.500 3zM806 502h6l-3 3zM857 502h6l-3 3z" class="dd"/>
<path d="M745 505h8M749 501v8M746 502l6 6" stroke="#222" stroke-width=".8"/>
<path d="M773 504.500h28" stroke="#111" stroke-width="2"/><path d="M820 504.500h32" stroke="#111"/>

<!-- bottom -->
<rect y="512" width="960" height="28" fill="#fff"/>
<rect x="0" y="513" width="1" height="27" fill="#333"/>
<rect x="953" y="515" width="6" height="25" fill="#2a2a2a"/>
</svg>
</body></html>
